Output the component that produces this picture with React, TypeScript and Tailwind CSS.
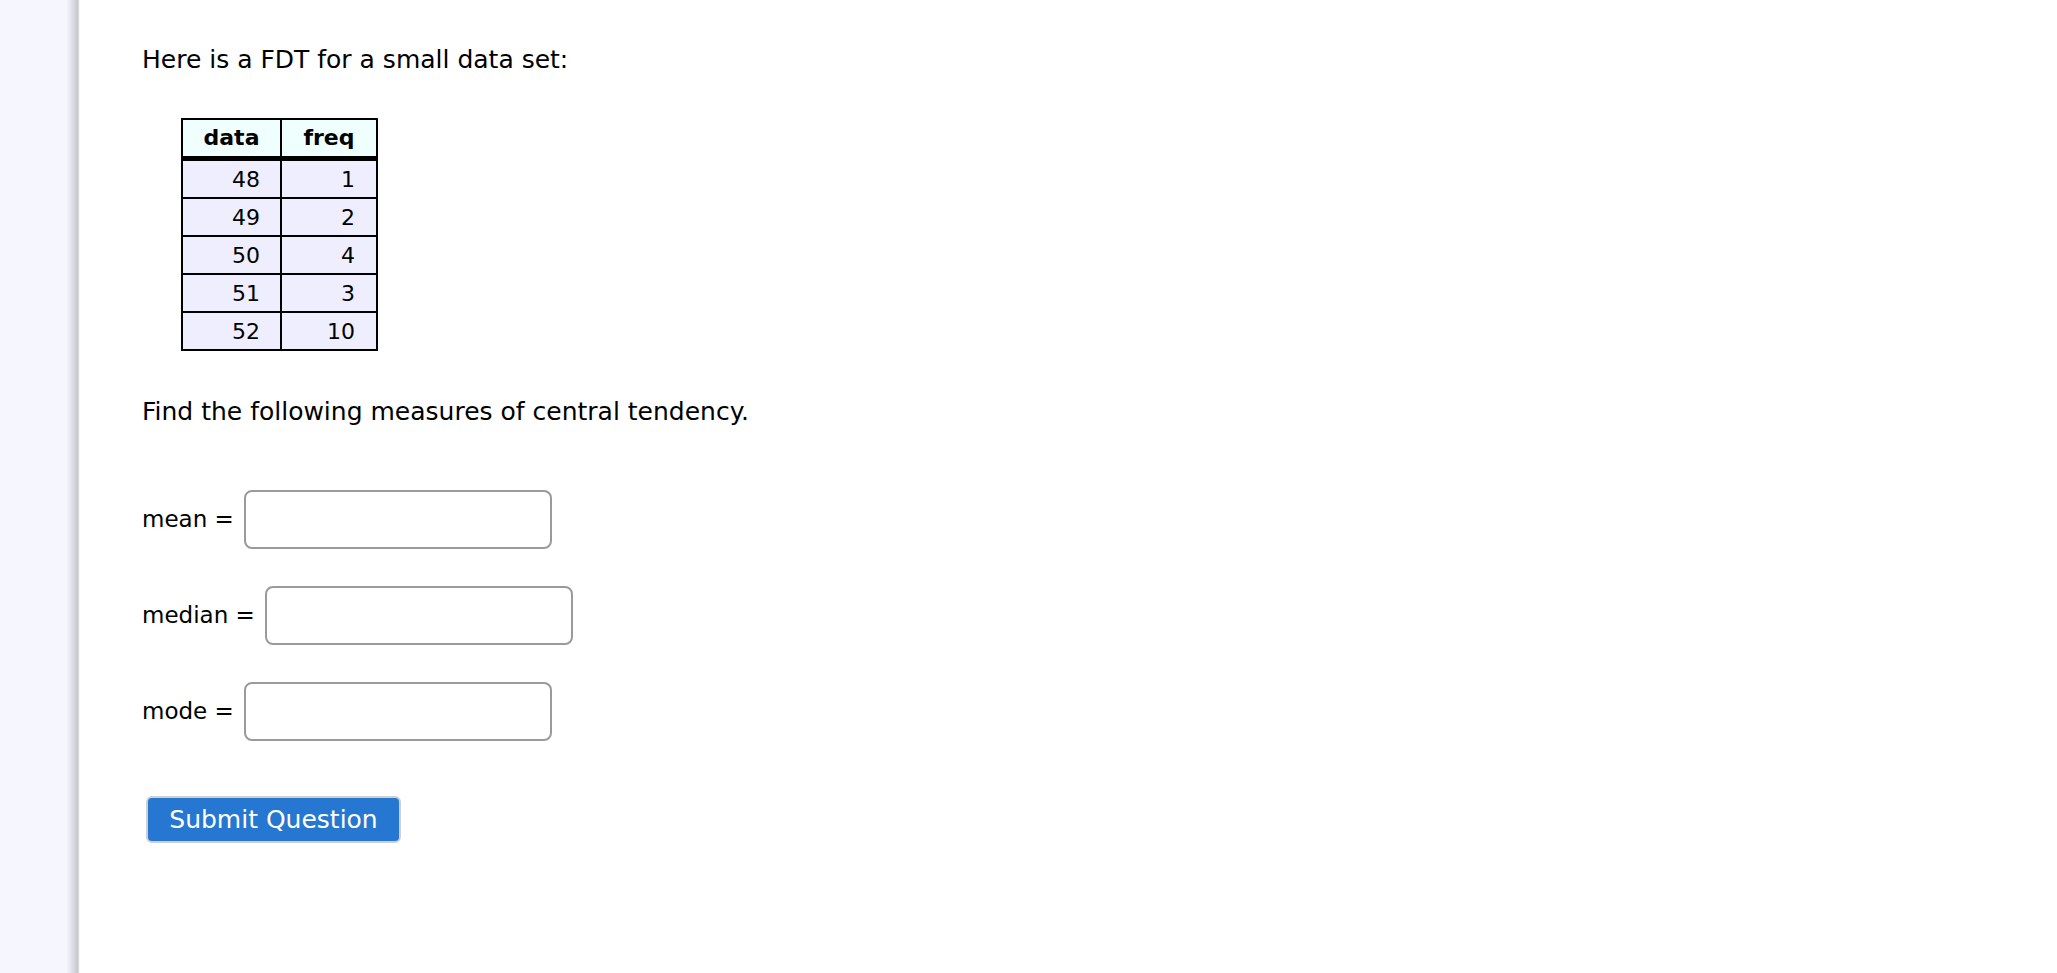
const rows = [
  { data: 48, freq: 1 },
  { data: 49, freq: 2 },
  { data: 50, freq: 4 },
  { data: 51, freq: 3 },
  { data: 52, freq: 10 },
];

function Field({ label }: { label: string }) {
  return (
    <div className="flex items-center">
      <span className="text-[23px]">{label}</span>
      <input
        type="text"
        className="ml-[10px] w-[308px] h-[59px] rounded-[8px] border-2 border-[#9a9a9a] bg-white outline-none"
      />
    </div>
  );
}

export default function App() {
  return (
    <div
      className="flex min-h-[973px] bg-white text-black"
      style={{ fontFamily: "'DejaVu Sans', Verdana, sans-serif" }}
    >
      {/* left rail */}
      <div className="w-[80px] shrink-0 bg-[linear-gradient(to_right,#f6f7fe_0%,#f6f7fe_83%,#e6e6ee_88%,#cfcfd6_95%,#c4c4ca_97.5%,#ececec_98.5%,#ffffff_100%)]" />

      <main className="pl-[62px] pt-[42px] text-[25px] leading-[35px]">
        <p>Here is a FDT for a small data set:</p>

        {/* frequency table */}
        <div className="mt-[41px] ml-[39px] inline-grid grid-cols-[97px_94px] gap-[2px] bg-black p-[2px] text-[22px] leading-none">
          <div className="mb-[3px] flex h-[36px] items-center justify-center bg-[#effffe] font-bold">
            data
          </div>
          <div className="mb-[3px] flex h-[36px] items-center justify-center bg-[#effffe] font-bold">
            freq
          </div>
          {rows.map((r) => (
            <div key={r.data} className="contents">
              <div className="flex h-[36px] items-center justify-end bg-[#eeeefe] pr-[20px] pt-[2px]">
                {r.data}
              </div>
              <div className="flex h-[36px] items-center justify-end bg-[#eeeefe] pr-[21px] pt-[2px]">
                {r.freq}
              </div>
            </div>
          ))}
        </div>

        <p className="mt-[43px]">Find the following measures of central tendency.</p>

        <div className="mt-[61px] flex flex-col gap-[37px]">
          <Field label="mean =" />
          <Field label="median =" />
          <Field label="mode =" />
        </div>

        <button
          type="button"
          className="mt-[55px] ml-[4px] h-[47px] w-[255px] rounded-[6px] border-2 border-[#cfcfcf] bg-[#2677d1] text-[25px] leading-none text-white"
        >
          Submit Question
        </button>
      </main>
    </div>
  );
}
